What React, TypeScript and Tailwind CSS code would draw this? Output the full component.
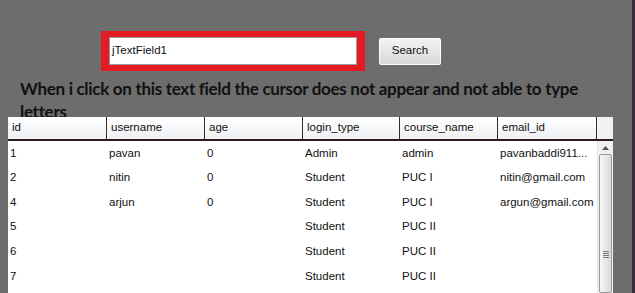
import React from "react";

const cols = [
  { name: "id", w: "w-[99px]" },
  { name: "username", w: "w-[98px]" },
  { name: "age", w: "w-[98px]" },
  { name: "login_type", w: "w-[97px]" },
  { name: "course_name", w: "w-[98px]" },
  { name: "email_id", w: "w-[99px]" },
];

const rows = [
  ["1", "pavan", "0", "Admin", "admin", "pavanbaddi911..."],
  ["2", "nitin", "0", "Student", "PUC I", "nitin@gmail.com"],
  ["4", "arjun", "0", "Student", "PUC I", "argun@gmail.com"],
  ["5", "", "", "Student", "PUC II", ""],
  ["6", "", "", "Student", "PUC II", ""],
  ["7", "", "", "Student", "PUC II", ""],
];

export default function App() {
  return (
    <div className="w-[635px] h-[293px] overflow-hidden flex bg-[#6d6d6d] text-[#111]" style={{ fontFamily: "'Liberation Sans', Arial, sans-serif" }}>
      <div className="w-[632px] h-full flex flex-col">
        <div className="flex items-center mt-[31px] ml-[101px]">
          <div className="w-[264px] h-[40px] bg-[#e31b23] px-[8px] py-[6px]">
            <div className="w-full h-full bg-white border border-[#9a9a9a] flex items-center pl-[2px] text-[11.5px]">
              jTextField1
            </div>
          </div>
          <div className="ml-[13px] w-[64px] h-[29px] rounded-[3px] border border-[#707070] bg-gradient-to-b from-[#f4f4f4] to-[#d8d8d8] flex items-center justify-center text-[11.5px] shadow-[inset_0_0_0_1px_#fcfcfc]">
            Search
          </div>
        </div>
        <div className="ml-[20px] mt-[6px] h-[40px] text-[17px] leading-[23px] font-bold tracking-[-0.3px] text-[#111] whitespace-nowrap" style={{ fontFamily: "Lato, 'Open Sans', sans-serif" }}>
          When i click on this text field the cursor does not appear and not able to type
          <br />
          letters
        </div>
        <div className="relative ml-[8px] w-[605px] flex-1 bg-white flex flex-col text-[11.5px]">
          <div className="flex h-[24px] border-b-2 border-[#2a1a1a]">
            {cols.map((c) => (
              <div key={c.name} className={`${c.w} h-full border-r border-[#3a2a2a] bg-gradient-to-b from-white to-[#eef0f3] flex items-center pl-[4px]`}>
                {c.name}
              </div>
            ))}
            <div className="flex-1 h-full bg-[#f2f2f2]" />
          </div>
          <div className="flex flex-1">
            <div className="w-[589px] flex flex-col">
              {rows.map((r, i) => (
                <div key={i} className="flex h-[24.6px] items-center">
                  {r.map((v, j) => (
                    <div key={j} className={`${cols[j].w} pl-[2px] whitespace-nowrap overflow-hidden`}>
                      {v}
                    </div>
                  ))}
                </div>
              ))}
            </div>
            <div className="w-[16px] bg-[#f0f0f0] flex flex-col border-l border-[#e6e6e6]">
              <div className="h-[13px] flex items-center justify-center">
                <svg width="7" height="4" viewBox="0 0 7 4">
                  <path d="M0 4 L3.5 0 L7 4 Z" fill="#555" />
                </svg>
              </div>
              <div className="flex-1 mx-[1px] rounded-[2px] border border-[#9a9a9a] bg-gradient-to-r from-[#f7f7f7] to-[#d9d9d9] flex flex-col items-center justify-start pt-[96px]">
                <div className="w-[6px] h-px bg-[#777]" />
                <div className="w-[6px] h-px bg-[#777] mt-[1px]" />
                <div className="w-[6px] h-px bg-[#777] mt-[1px]" />
                <div className="w-[6px] h-px bg-[#777] mt-[1px]" />
              </div>
            </div>
          </div>
        </div>
      </div>
      <div className="flex-1 h-full bg-[#3b2c3b]" />
    </div>
  );
}
